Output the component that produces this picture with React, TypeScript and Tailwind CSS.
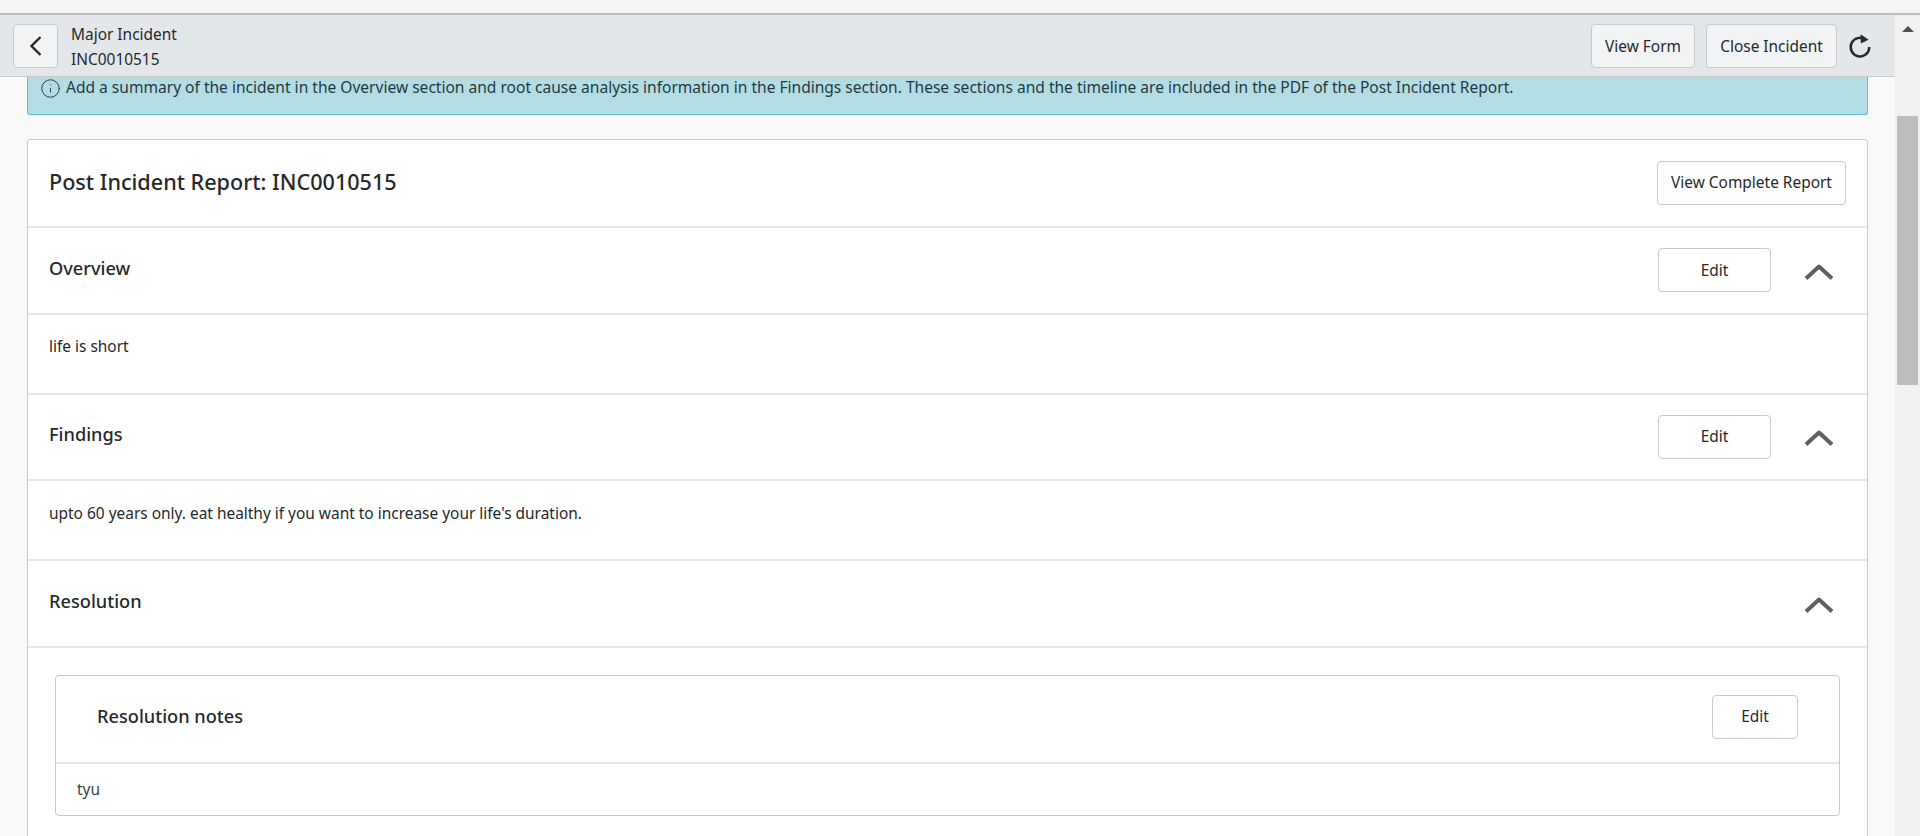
import * as React from "react";
import { Info } from "lucide-react";

const ChevronUp = () => (
  <svg width="30" height="18" viewBox="0 0 30 18" fill="none" stroke="#5f6062" strokeWidth="4" strokeLinejoin="round" className="mt-[3px]">
    <polyline points="2,15.5 15,3.5 28,15.5" />
  </svg>
);

const BackIcon = () => (
  <svg width="14" height="22" viewBox="0 0 14 22" fill="none" stroke="#26292b" strokeWidth="2.4">
    <polyline points="11.5,2 2.5,11 11.5,20" />
  </svg>
);

const RefreshIcon = () => (
  <svg width="24" height="26" viewBox="0 0 24 26" fill="none">
    <path d="M17.5 6.6A9.3 9.3 0 1 0 21.3 14" stroke="#26292b" strokeWidth="2.5" />
    <path d="M12.6 1.2L20.6 6.8L12.8 10.6Z" fill="#26292b" />
  </svg>
);

const btn = "flex items-center justify-center h-[44px] rounded-[4px] border border-[#cacaca] text-[#26292b]";

const Section = ({ title, edit, body }: { title: string; edit?: boolean; body?: string }) => (
  <>
    <div className="flex items-center h-[86.5px] pl-[21px] pr-[33px] border-b-2 border-[#e4e7ea]">
      <h2 className="flex-1 text-[18.2px] font-medium text-[#26292b] pb-1">{title}</h2>
      {edit && <button className={`${btn} w-[113px] mr-[33px] bg-white`}>Edit</button>}
      <ChevronUp />
    </div>
    {body && (
      <div className="flex items-center h-[80px] pl-[21px] pb-[13px] border-b-2 border-[#e4e7ea] text-[#26292b]">{body}</div>
    )}
  </>
);

export default function App() {
  return (
    <div className="h-[836px] overflow-hidden flex flex-col bg-[#f5f5f5] text-[15.45px] font-['Noto_Sans',sans-serif]">
      <div className="h-[13px] shrink-0" />
      <div className="flex flex-1 min-h-0 border-t-2 border-[#bdbdbd]">
        <div className="flex-1 min-w-0 flex flex-col bg-[#f9f9f9]">
          {/* Header */}
          <header className="flex items-center h-[62px] shrink-0 pl-[13px] pr-[23px] bg-[#e4e7ea] border-b border-[#cacaca]">
            <button className={`${btn} w-[45px] bg-[#f1f3f5]`}>
              <BackIcon />
            </button>
            <div className="flex-1 ml-[13px] pt-[2px] leading-[25px] text-[#26292b]">
              <div>Major Incident</div>
              <div>INC0010515</div>
            </div>
            <button className={`${btn} w-[104px] pt-[2px] bg-[#f1f3f5]`}>View Form</button>
            <button className={`${btn} w-[131px] ml-[11px] pt-[2px] bg-[#f1f3f5]`}>Close Incident</button>
            <span className="ml-[11px]">
              <RefreshIcon />
            </span>
          </header>

          <div className="flex-1 min-h-0 overflow-hidden pl-[27px] pr-[27px]">
            {/* Info banner */}
            <div className="flex items-start gap-[5px] h-[38px] pl-[12px] bg-[#b3dce3] border border-t-0 border-[#62bcd2] rounded-b-[3px] text-[#1f3a44] text-[15.55px]">
              <Info size={21} strokeWidth={1.1} className="mt-[1px] shrink-0" />
              <span className="leading-[20px]">
                Add a summary of the incident in the Overview section and root cause analysis information in the Findings section. These sections and the timeline are included in the PDF of the Post Incident Report.
              </span>
            </div>

            {/* Report card */}
            <div className="mt-[24px] bg-white border border-[#cacaca] rounded-[3px]">
              <div className="flex items-center justify-between h-[88px] pl-[21px] pr-[21px] border-b-2 border-[#e4e7ea]">
                <h1 className="text-[21.6px] font-medium text-[#26292b] pb-[2px]">Post Incident Report: INC0010515</h1>
                <button className={`${btn} w-[189px] bg-white`}>View Complete Report</button>
              </div>
              <Section title="Overview" edit body="life is short" />
              <Section title="Findings" edit body="upto 60 years only. eat healthy if you want to increase your life's duration." />
              <Section title="Resolution" />
              <div className="pt-[27px] px-[27px] pb-[40px]">
                <div className="border border-[#cacaca] rounded-[4px]">
                  <div className="flex items-center justify-between h-[88px] pl-[41px] pr-[41px] pb-[3px] border-b-2 border-[#e4e7ea]">
                    <h3 className="text-[18.2px] font-medium text-[#26292b]">Resolution notes</h3>
                    <button className={`${btn} w-[86px] bg-white`}>Edit</button>
                  </div>
                  <div className="flex items-center h-[51px] pl-[21px] pt-[2px] text-[#3a3f42]">tyu</div>
                </div>
              </div>
            </div>
          </div>
        </div>

        {/* Scrollbar */}
        <div className="w-[25px] shrink-0 bg-[#f1f1f1] flex flex-col items-center">
          <div className="h-[28px] flex items-center justify-center">
            <div className="w-0 h-0 border-x-[6px] border-x-transparent border-b-[6px] border-b-[#505050]" />
          </div>
          <div className="w-[21px] h-[269px] mt-[73px] bg-[#bdbdbd]" />
        </div>
      </div>
    </div>
  );
}
